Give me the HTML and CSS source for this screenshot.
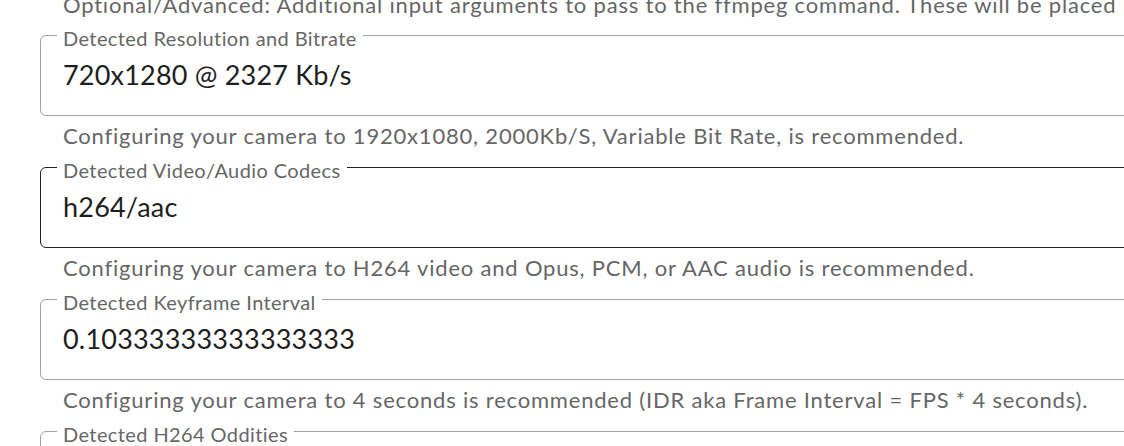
FILE: index.html
```html
<!DOCTYPE html>
<html>
  <head>
    <title>Camera Settings</title>
    <link rel="stylesheet" href="styles.css">
  </head>
  <body>
    <div class="settings">
      <p class="helper helper-top">Optional/Advanced: Additional input arguments to pass to the ffmpeg command. These will be placed before the input url.</p>

      <fieldset class="field">
        <legend class="field-label">Detected Resolution and Bitrate</legend>
        <div class="field-value">720x1280 @ 2327 Kb/s</div>
      </fieldset>
      <p class="helper">Configuring your camera to 1920x1080, 2000Kb/S, Variable Bit Rate, is recommended.</p>

      <fieldset class="field field-hover">
        <legend class="field-label">Detected Video/Audio Codecs</legend>
        <div class="field-value">h264/aac</div>
      </fieldset>
      <p class="helper">Configuring your camera to H264 video and Opus, PCM, or AAC audio is recommended.</p>

      <fieldset class="field">
        <legend class="field-label">Detected Keyframe Interval</legend>
        <div class="field-value">0.10333333333333333</div>
      </fieldset>
      <p class="helper">Configuring your camera to 4 seconds is recommended (IDR aka Frame Interval = FPS * 4 seconds).</p>

      <fieldset class="field">
        <legend class="field-label">Detected H264 Oddities</legend>
        <div class="field-value"></div>
      </fieldset>
    </div>
  </body>
</html>
```

FILE: styles.css
```css
body {
  margin: 0;
  overflow: hidden;
  background-color: white;
  font-family: Lato, "Noto Sans", sans-serif;
}

.settings {
  width: 1300px;
  margin-left: 40px;
  margin-top: -16px;
}

.helper {
  margin: 0;
  padding: 7px 0 9px 23px;
  font-size: 22px;
  line-height: 26px;
  letter-spacing: 0.8px;
  color: rgb(102, 102, 102);
  white-space: nowrap;
}

.helper-top {
  padding-top: 8px;
  padding-bottom: 8px;
}

.field {
  margin: 0;
  padding: 0 22px 22px;
  border: solid 1px rgb(160, 160, 160);
  border-radius: 6px;
}

.field-hover {
  border-color: rgb(34, 34, 34);
}

.field-label {
  margin-left: -6px;
  padding: 6px 6px 0;
  font-size: 20px;
  line-height: 12px;
  letter-spacing: 0.4px;
  color: rgb(102, 102, 102);
}

.field-value {
  height: 36px;
  padding-top: 13px;
  font-size: 27px;
  line-height: 36px;
  letter-spacing: 0.2px;
  color: rgb(30, 30, 30);
}
```
